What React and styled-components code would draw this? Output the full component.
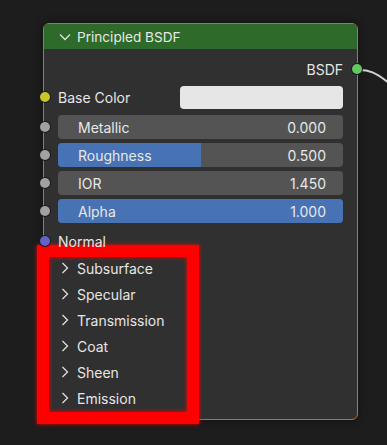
import React from "react";
import styled, { createGlobalStyle } from "styled-components";

const GlobalStyle = createGlobalStyle`
  html, body {
    margin: 0;
    padding: 0;
    background: #1d1d1d;
  }
  body {
    font-family: Inter, "Noto Sans", sans-serif;
    color: #e6e6e6;
  }
`;

const Canvas = styled.div`
  position: relative;
  width: 387px;
  height: 445px;
  overflow: hidden;
  background: #1d1d1d;
  padding: 23px 0 0 43px;
  box-sizing: border-box;
`;

const Node = styled.div`
  position: relative;
  width: 315px;
  height: 397px;
  box-sizing: border-box;
  border: 1.5px solid #d2691e;
  border-radius: 6px;
  background: #303030;
  box-shadow: 0 0 10px rgba(0, 0, 0, 0.45);
  display: flex;
  flex-direction: column;
`;

const Header = styled.div`
  height: 25px;
  background: #2e6b2a;
  border-radius: 4px 4px 0 0;
  display: flex;
  align-items: center;
  gap: 6px;
  padding-left: 15px;
  font-size: 13.6px;
  color: #e8e8e8;
`;

const Body = styled.div`
  display: flex;
  flex-direction: column;
  padding: 8px 14px 0 14px;
`;

const Row = styled.div`
  position: relative;
  height: ${(p) => p.h || 24}px;
  margin-top: ${(p) => p.mt || 0}px;
  display: flex;
  align-items: center;
  font-size: 14px;
  color: #e6e6e6;
  z-index: 3;
`;

const Socket = styled.span`
  position: absolute;
  top: 50%;
  ${(p) => (p.out ? "right: -19px;" : "left: -18.5px;")}
  width: 10px;
  height: 10px;
  margin-top: -5px;
  border-radius: 50%;
  background: ${(p) => p.color};
  box-shadow: 0 0 0 1px #1a1a1a;
  z-index: 2;
`;

const OutLabel = styled.span`
  margin-left: auto;
`;

const Swatch = styled.div`
  margin-left: auto;
  width: 163px;
  height: 23px;
  border-radius: 4px;
  background: #e6e6e6;
`;

const Slider = styled.div`
  position: relative;
  flex: 1;
  height: 24px;
  border-radius: 4px;
  overflow: hidden;
  background: #545454;
  display: flex;
  align-items: center;
  justify-content: space-between;
  padding: 0 17px 0 20px;
  font-size: 14px;
`;

const Fill = styled.div`
  position: absolute;
  left: 0;
  top: 0;
  bottom: 0;
  background: #4772b3;
`;

const SliderText = styled.span`
  position: relative;
  color: #e8e8e8;
`;

const Panels = styled.div`
  display: flex;
  flex-direction: column;
  margin-top: 2px;
`;

const PanelRow = styled.div`
  height: 26px;
  display: flex;
  align-items: center;
  gap: 8px;
  padding-left: 3px;
  font-size: 14px;
  color: #e6e6e6;
`;

const Wire = styled.svg`
  position: absolute;
  left: 355px;
  top: 62px;
`;

const Highlight = styled.div`
  position: absolute;
  left: 37px;
  top: 245px;
  width: 162px;
  height: 179px;
  box-sizing: border-box;
  border: 12px solid #ff0000;
  box-shadow: 0 0 4px #ff0000, inset 0 0 4px #ff0000;
  pointer-events: none;
`;

const Chevron = ({ down }) =>
  down ? (
    <svg width="12" height="8" viewBox="0 0 12 8">
      <polyline points="1,1.5 6,6.5 11,1.5" fill="none" stroke="#e0e0e0" strokeWidth="1.3" />
    </svg>
  ) : (
    <svg width="8" height="12" viewBox="0 0 8 12">
      <polyline points="1.5,1 6.5,6 1.5,11" fill="none" stroke="#e0e0e0" strokeWidth="1.3" />
    </svg>
  );

const sliders = [
  { label: "Metallic", value: "0.000", fill: 0 },
  { label: "Roughness", value: "0.500", fill: 0.5 },
  { label: "IOR", value: "1.450", fill: 0 },
  { label: "Alpha", value: "1.000", fill: 1 },
];

const panels = ["Subsurface", "Specular", "Transmission", "Coat", "Sheen", "Emission"];

const App = () => {
  return (
    <>
      <GlobalStyle />
      <Canvas>
        <Node>
          <Header>
            <Chevron down />
            Principled BSDF
          </Header>
          <Body>
            <Row h={24}>
              <OutLabel>BSDF</OutLabel>
              <Socket out color="#63c763" />
            </Row>
            <Row h={24} mt={4}>
              <Socket color="#c7c729" />
              Base Color
              <Swatch />
            </Row>
            {sliders.map((s, i) => (
              <Row key={s.label} h={24} mt={i === 0 ? 6 : 4}>
                <Socket color="#a1a1a1" />
                <Slider>
                  <Fill style={{ width: `${s.fill * 100}%` }} />
                  <SliderText>{s.label}</SliderText>
                  <SliderText>{s.value}</SliderText>
                </Slider>
              </Row>
            ))}
            <Row h={24} mt={6}>
              <Socket color="#6363c7" />
              Normal
            </Row>
            <Panels>
              {panels.map((p) => (
                <PanelRow key={p}>
                  <Chevron />
                  {p}
                </PanelRow>
              ))}
            </Panels>
          </Body>
        </Node>
        <Wire width="40" height="30" viewBox="0 0 40 30">
          <path d="M4 8 C 14 8, 20 10, 34 21" fill="none" stroke="#d4d4d4" strokeWidth="2" />
        </Wire>
        <Highlight />
      </Canvas>
    </>
  );
};

export default App;
